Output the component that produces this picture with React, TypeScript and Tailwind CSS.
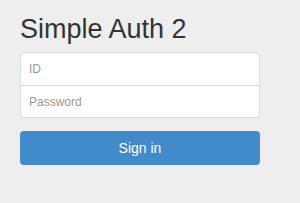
import React from "react";

const App: React.FC = () => {
  return (
    <div
      className="w-[300px] h-[203px] bg-[#eeeeee] pl-5 pt-[14px]"
      style={{ fontFamily: '"Liberation Sans", Arial, sans-serif' }}
    >
      <h1 className="text-[27px] leading-[30px] text-[#333333] font-normal">Simple Auth 2</h1>

      {/* Credentials */}
      <form className="w-[240px] mt-2" onSubmit={(e) => e.preventDefault()}>
        <div className="flex flex-col bg-white border border-[#dcdcdc] rounded-[4px] shadow-[inset_0_1px_1px_rgba(0,0,0,0.05)]">
          <input
            type="text"
            placeholder="ID"
            className="h-[33px] px-2 text-[12px] text-[#555] placeholder:text-[#999] bg-transparent outline-none border-b border-[#dcdcdc]"
          />
          <input
            type="password"
            placeholder="Password"
            className="h-[31px] px-2 text-[12px] text-[#555] placeholder:text-[#999] bg-transparent outline-none"
          />
        </div>

        <button
          type="submit"
          className="mt-[13px] w-full h-[34px] rounded-[4px] bg-[#428bca] text-white text-[14px] flex items-center justify-center"
        >
          Sign in
        </button>
      </form>
    </div>
  );
};

export default App;
